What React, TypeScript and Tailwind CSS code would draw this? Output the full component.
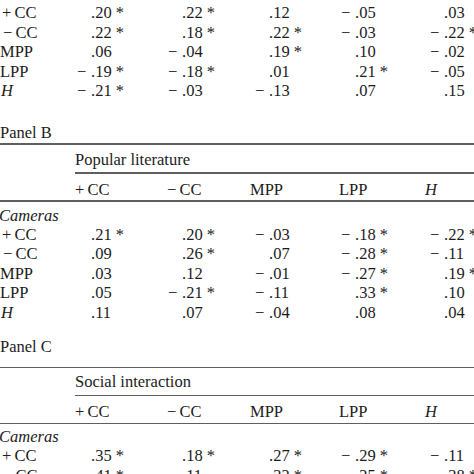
import React from "react";

type Row = { label: React.ReactNode; labelCls?: string; vals: string[] };

const cols = "grid grid-cols-[75px_91px_87px_86px_89px_1fr]";

function Num({ v }: { v: string }) {
  const neg = v.startsWith("-");
  const star = v.endsWith("*");
  const core = v.replace("-", "").replace("*", "");
  return (
    <div className="flex whitespace-nowrap">
      <span className="w-[16px] pl-[2px] shrink-0">{neg ? "\u2212" : ""}</span>
      <span>{core}</span>
      {star && <span className="ml-[4px]">*</span>}
    </div>
  );
}

function DataRow({ r }: { r: Row }) {
  return (
    <div className={`${cols} h-[19.5px] items-center`}>
      <div className={`whitespace-nowrap ${r.labelCls ?? ""}`}>{r.label}</div>
      {r.vals.map((v, i) => (
        <Num key={i} v={v} />
      ))}
    </div>
  );
}

const labels: { label: string; cls: string }[] = [
  { label: "+\u2009CC", cls: "pl-[2px]" },
  { label: "\u2212\u2009CC", cls: "pl-[3px]" },
  { label: "MPP", cls: "" },
  { label: "LPP", cls: "" },
  { label: "H", cls: "italic pl-[1px]" },
];

function makeRows(data: string[][]): Row[] {
  return data.map((vals, i) => ({ label: labels[i].label, labelCls: labels[i].cls, vals }));
}

const panelA = makeRows([
  [".20*", ".22*", ".12", "-.05", ".03"],
  [".22*", ".18*", ".22*", "-.03", "-.22*"],
  [".06", "-.04", ".19*", ".10", "-.02"],
  ["-.19*", "-.18*", ".01", ".21*", "-.05"],
  ["-.21*", "-.03", "-.13", ".07", ".15"],
]);

const panelB = makeRows([
  [".21*", ".20*", "-.03", "-.18*", "-.22*"],
  [".09", ".26*", ".07", "-.28*", "-.11"],
  [".03", ".12", "-.01", "-.27*", ".19*"],
  [".05", "-.21*", "-.11", ".33*", ".10"],
  [".11", ".07", "-.04", ".08", ".04"],
]);

const panelC = makeRows([
  [".35*", ".18*", ".27*", "-.29*", "-.11"],
  [".41*", ".11", ".22*", "-.25*", "-.28*"],
]);

function Rule() {
  return <div className="h-[1.5px] bg-[#5f5f5f]" />;
}

function Header({ title }: { title: string }) {
  return (
    <>
      <div className="flex">
        <div className="w-[75px] shrink-0" />
        <div className="flex-1">
          <div className="h-[19.5px] flex items-center whitespace-nowrap">{title}</div>
          <div className="mt-[3px] h-[1.5px] bg-[#5f5f5f]" />
        </div>
      </div>
      <div className={`${cols} h-[19.5px] items-center mt-[6px]`}>
        <div />
        <div>+&thinsp;CC</div>
        <div className="pl-[1px]">{"\u2212"}&thinsp;CC</div>
        <div className="-ml-[3px]">MPP</div>
        <div>LPP</div>
        <div className="-ml-[3px] italic">H</div>
      </div>
      <div className="mt-[1px]">
        <Rule />
      </div>
    </>
  );
}

export default function App() {
  return (
    <div
      className="w-[474px] h-[474px] overflow-hidden bg-white text-[#1c1c1c] text-[16.5px] leading-[19.5px]"
      style={{ fontFamily: '"Liberation Serif", "Times New Roman", serif' }}
    >
      <div className="pt-[3px]">
        {panelA.map((r, i) => (
          <DataRow key={i} r={r} />
        ))}
      </div>

      <div className="mt-[22px] h-[19.5px] flex items-center">Panel B</div>
      <div className="mt-[1px]">
        <Rule />
      </div>
      <div className="mt-[5px]">
        <Header title="Popular literature" />
      </div>
      <div className="mt-[5px] h-[18px] flex items-center italic -ml-[1px]">Cameras</div>
      {panelB.map((r, i) => (
        <DataRow key={i} r={r} />
      ))}

      <div className="mt-[15px] h-[19.5px] flex items-center">Panel C</div>
      <div className="mt-[10px]">
        <Rule />
      </div>
      <div className="mt-[4px]">
        <Header title="Social interaction" />
      </div>
      <div className="mt-[4px] h-[18px] flex items-center italic -ml-[1px]">Cameras</div>
      {panelC.map((r, i) => (
        <DataRow key={i} r={r} />
      ))}
    </div>
  );
}
